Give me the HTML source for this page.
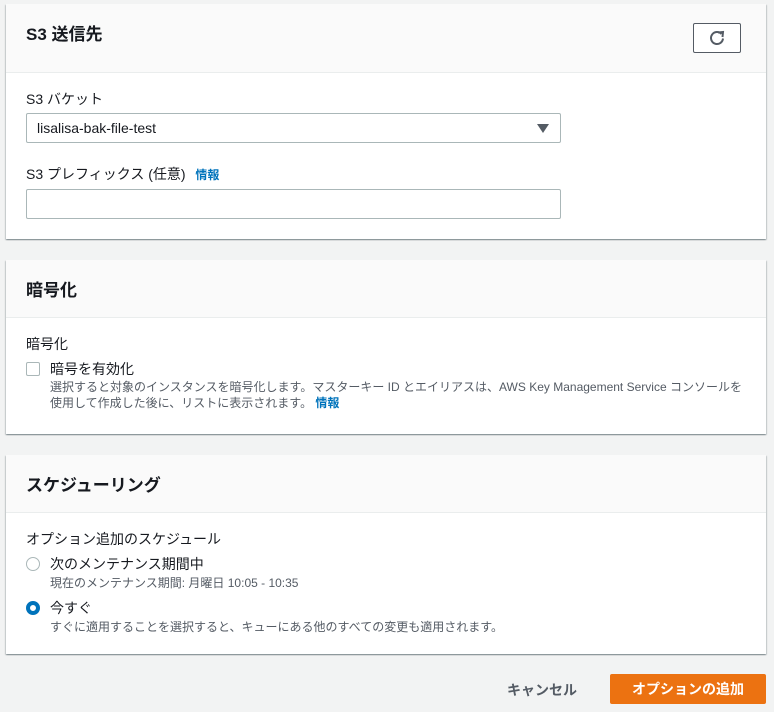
<!DOCTYPE html>
<html><head><meta charset="utf-8"><style>
*{box-sizing:border-box;margin:0;padding:0}
body{width:774px;height:712px;background:#f2f3f3;font-family:"Liberation Sans","Noto Sans CJK JP",sans-serif;color:#16191f;position:relative;overflow:hidden;font-size:14px}
.p{position:absolute;left:6px;width:760px;background:#fff;box-shadow:0 1px 1px rgba(0,28,36,.3),1px 1px 1px rgba(0,28,36,.15),-1px 1px 1px rgba(0,28,36,.15)}
.h{background:#fafafa;border-bottom:1px solid #eaeded;position:absolute;left:0;right:0;top:0}
.h span{position:absolute;left:20px;font-size:17px;font-weight:bold}
.a{position:absolute;white-space:nowrap}
.in{position:absolute;left:20px;width:535px;height:30px;border:1px solid #aab7b8;border-radius:2px;background:#fff}
.sm{font-size:12px;color:#545b64}
.lk{color:#0073bb;font-weight:bold;font-size:12px}
</style></head><body>
<div class="p" style="top:4px;height:235px">
 <div class="h" style="height:69px"><span style="top:16px">S3 送信先</span>
  <div style="position:absolute;left:687px;top:19px;width:48px;height:30px;border:1px solid #545b64;border-radius:2px;background:#fff">
   <svg width="46" height="28" viewBox="0 0 46 28"><path d="M27.5 10 A6 6 0 1 0 29 14.5" fill="none" stroke="#545b64" stroke-width="2"/><path d="M24 8.5 L29 8 L28.5 13" fill="none" stroke="#545b64" stroke-width="2"/></svg>
  </div>
 </div>
 <div class="a" style="left:20px;top:85px">S3 バケット</div>
 <div class="in" style="top:109px"><span class="a" style="left:10px;top:6px">lisalisa-bak-file-test</span>
  <svg class="a" style="right:11px;top:10px" width="12" height="9" viewBox="0 0 12 9"><path d="M0 0H12L6 9Z" fill="#545b64"/></svg></div>
 <div class="a" style="left:20px;top:160px">S3 プレフィックス (任意) <span class="lk" style="margin-left:6px">情報</span></div>
 <div class="in" style="top:185px"></div>
</div>
<div class="p" style="top:260px;height:174px">
 <div class="h" style="height:58px"><span style="top:16px">暗号化</span></div>
 <div class="a" style="left:20px;top:74px">暗号化</div>
 <div class="a" style="left:20px;top:102px;width:14px;height:14px;border:1px solid #aab7b8;border-radius:2px"></div>
 <div class="a" style="left:44px;top:99px">暗号を有効化</div>
 <div class="a sm" style="left:44px;top:119px;line-height:16px">選択すると対象のインスタンスを暗号化します。マスターキー ID とエイリアスは、AWS Key Management Service コンソールを<br>使用して作成した後に、リストに表示されます。 <span class="lk">情報</span></div>
</div>
<div class="p" style="top:455px;height:199px">
 <div class="h" style="height:58px"><span style="top:16px">スケジューリング</span></div>
 <div class="a" style="left:20px;top:74px">オプション追加のスケジュール</div>
 <div class="a" style="left:20px;top:102px;width:14px;height:14px;border:1px solid #aab7b8;border-radius:50%"></div>
 <div class="a" style="left:44px;top:99px">次のメンテナンス期間中</div>
 <div class="a sm" style="left:44px;top:119px">現在のメンテナンス期間: 月曜日 10:05 - 10:35</div>
 <div class="a" style="left:20px;top:146px;width:14px;height:14px;border:4px solid #0073bb;border-radius:50%"></div>
 <div class="a" style="left:44px;top:143px">今すぐ</div>
 <div class="a sm" style="left:44px;top:163px">すぐに適用することを選択すると、キューにある他のすべての変更も適用されます。</div>
</div>
<div class="a" style="left:507px;top:680px;font-weight:bold;color:#545b64">キャンセル</div>
<div class="a" style="left:610px;top:674px;width:156px;height:30px;background:#ec7211;border-radius:2px;color:#fff;font-weight:bold;text-align:center;line-height:30px">オプションの追加</div>
</body></html>
